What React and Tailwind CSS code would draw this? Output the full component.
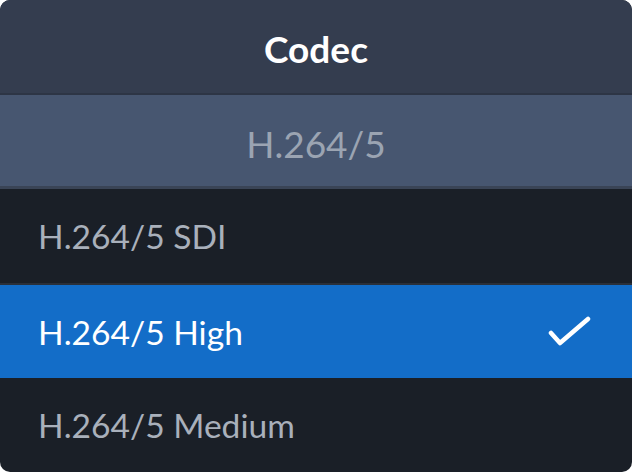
export default function App() {
  const font = { fontFamily: 'Lato, "Noto Sans", sans-serif' };
  return (
    <div className="w-[632px] h-[472px] bg-white" style={font}>
      <div className="w-full h-full rounded-[10px] overflow-hidden flex flex-col bg-[#1a1f27]">
        <div className="h-[93px] bg-[#343d4f] flex items-center justify-center pt-[3px]">
          <span className="text-[37px] font-bold text-white leading-none">Codec</span>
        </div>
        <div className="h-[2px] bg-[#2d3545]" />
        <div className="h-[91px] bg-[#475670] flex items-center justify-center pt-[5px]">
          <span className="text-[37px] text-[#9ba4b2] leading-none">H.264/5</span>
        </div>
        <div className="h-[3px] bg-[#3a4456]" />
        <div className="h-[94px] flex items-center pl-[38px] pt-[2px]">
          <span className="text-[33.6px] text-[#a9b0bb] leading-none">H.264/5 SDI</span>
        </div>
        <div className="h-[2px] bg-[#2a303a]" />
        <div className="h-[93px] bg-[#136dc8] flex items-center justify-between pl-[38px] pr-[40px] pt-[2px]">
          <span className="text-[33.6px] text-white leading-none">H.264/5 High</span>
          <svg width="44" height="34" viewBox="0 0 44 34" fill="none">
            <polyline points="3,17 12,27 40,3" stroke="white" strokeWidth="4.5" strokeLinecap="round" strokeLinejoin="round" />
          </svg>
        </div>
        <div className="h-[94px] flex items-center pl-[38px] pt-[2px]">
          <span className="text-[33.6px] text-[#a9b0bb] leading-none">H.264/5 Medium</span>
        </div>
      </div>
    </div>
  );
}
